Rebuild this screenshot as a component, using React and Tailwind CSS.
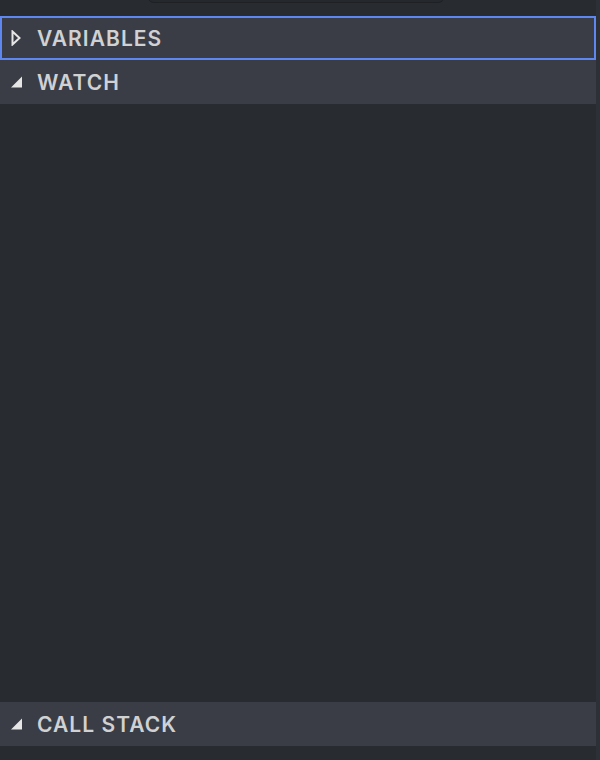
import { useState } from "react";

const FONT = { fontFamily: "Inter, 'Noto Sans', sans-serif" };

// hollow right-pointing triangle (collapsed)
const Collapsed = () => (
  <svg width="12" height="16" viewBox="0 0 12 16" className="shrink-0">
    <path d="M1.5 1.5 L8.5 8 L1.5 14.5 Z" fill="none" stroke="#e6e6e6" strokeWidth="2" strokeLinejoin="miter" />
  </svg>
);

// filled corner triangle (expanded)
const Expanded = () => (
  <svg width="12" height="12" viewBox="0 0 12 12" className="shrink-0">
    <path d="M11 0.5 L11 11.5 L0 11.5 Z" fill="#e6e6e6" />
  </svg>
);

const SectionHeader = ({ title, open, focused }) => (
  <div
    className={`flex h-[44px] items-center bg-[#3a3d46] ${
      focused ? "border-2 border-[#5f87f0] pl-[9px]" : "pl-[11px]"
    }`}
  >
    <div className="flex w-[26px] items-center">
      {open ? <Expanded /> : <Collapsed />}
    </div>
    <span
      className="pt-px text-[21px] font-semibold uppercase tracking-[0.05em] text-[#d0d1d3]"
      style={FONT}
    >
      {title}
    </span>
  </div>
);

export default function App() {
  const [sections] = useState([
    { title: "Variables", open: false, focused: true },
    { title: "Watch", open: true },
  ]);

  return (
    <div className="flex h-[760px] w-[600px] overflow-hidden bg-[#282b30]">
      <div className="flex flex-1 flex-col">
        {/* top toolbar remnant */}
        <div className="flex h-[16px] shrink-0 justify-center">
          <div className="-mt-4 ml-[-4px] h-[19px] w-[298px] rounded-b-[7px] border border-[#1e2024] bg-[#25282c]" />
        </div>

        {sections.map((s) => (
          <SectionHeader key={s.title} {...s} />
        ))}

        <div className="flex-1" />

        <SectionHeader title="Call Stack" open />
        <div className="h-[14px] shrink-0" />
      </div>
      {/* scrollbar gutter */}
      <div className="w-[4px] shrink-0 bg-[#2d3036]" />
    </div>
  );
}
